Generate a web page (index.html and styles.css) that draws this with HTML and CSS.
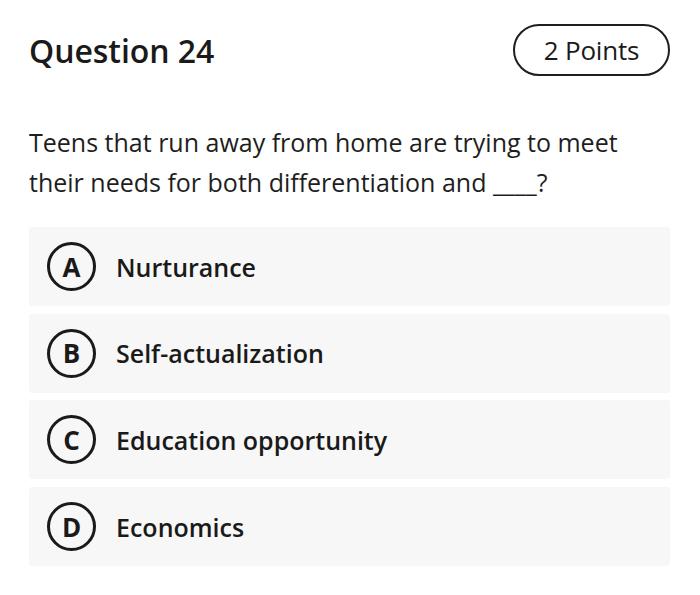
FILE: index.html
```html
<!DOCTYPE html>
<html>
<head>
<meta charset="utf-8">
<link rel="stylesheet" href="styles.css">
</head>
<body>
<div class="page">
  <div class="header">
    <h1 class="title">Question 24</h1>
    <div class="points">2 Points</div>
  </div>
  <p class="question">Teens that run away from home are trying to meet their needs for both differentiation and ____?</p>
  <div class="options">
    <div class="option"><span class="letter">A</span><span class="label">Nurturance</span></div>
    <div class="option"><span class="letter">B</span><span class="label">Self-actualization</span></div>
    <div class="option"><span class="letter">C</span><span class="label">Education opportunity</span></div>
    <div class="option"><span class="letter">D</span><span class="label">Economics</span></div>
  </div>
</div>
</body>
</html>
```
FILE: styles.css
```css
html, body {
  margin: 0;
  padding: 0;
  background: #ffffff;
}
body {
  font-family: "Open Sans", "Noto Sans", sans-serif;
  color: #1a1a1a;
}
.page {
  padding: 24px 30px 0 29px;
}
.header {
  display: flex;
  justify-content: space-between;
  align-items: center;
  height: 52px;
}
.title {
  margin: 0;
  font-size: 32px;
  font-weight: 600;
  letter-spacing: -0.05px;
}
.points {
  box-sizing: border-box;
  width: 157px;
  height: 52px;
  border: 2px solid #1e1e1e;
  border-radius: 26px;
  display: flex;
  align-items: center;
  justify-content: center;
  font-size: 26px;
  font-weight: 500;
  letter-spacing: -0.2px;
}
.question {
  margin: 46px 0 0 0;
  font-size: 25px;
  line-height: 40px;
  font-weight: 400;
  color: #1e1e1e;
  max-width: 620px;
}
.options {
  margin-top: 25px;
  display: flex;
  flex-direction: column;
  gap: 7.7px;
}
.option {
  height: 79px;
  background: #f7f7f7;
  border-radius: 3px;
  display: flex;
  align-items: center;
  padding-left: 18px;
}
.letter {
  box-sizing: border-box;
  width: 49px;
  height: 49px;
  border: 3px solid #1a1a1a;
  border-radius: 50%;
  display: flex;
  align-items: center;
  justify-content: center;
  font-size: 26px;
  font-weight: 700;
  line-height: 1;
  flex: none;
}
.label {
  margin-left: 20px;
  font-size: 25px;
  font-weight: 600;
}
```
